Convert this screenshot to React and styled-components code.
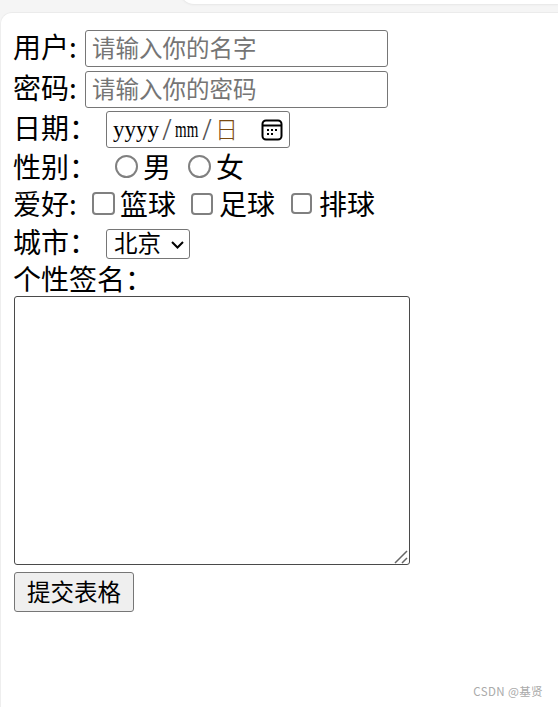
import React from 'react';
import styled, { createGlobalStyle } from 'styled-components';

const GlobalStyle = createGlobalStyle`
  html, body { margin: 0; padding: 0; background: #f5f5f5; }
  body { font-family: "Noto Sans CJK SC", "Liberation Sans", sans-serif; color: #000; }
`;

const Page = styled.div`
  width: 558px; height: 707px; overflow: hidden; position: relative;
  display: flex; flex-direction: column;
`;

const TopTab = styled.div`
  height: 16px; margin: -12px 0 0 180px; background: #fff; flex: none;
  border-bottom-left-radius: 14px;
  box-shadow: 0 1px 2px #e6e6e6;
`;

const Panel = styled.form`
  margin-top: 8px; flex: 1; background: #fff;
  border-top: 1px solid #ebebeb; border-left: 1px solid #eee;
  border-top-left-radius: 12px;
  padding: 17px 0 0 13px;
  display: flex; flex-direction: column; align-items: flex-start;
`;

const Row = styled.div`
  display: flex; align-items: center; height: ${p => p.$h}px;
  margin-bottom: ${p => p.$mb || 0}px;
  font-size: 28px; line-height: 37px;
`;

const Label = styled.span`
  width: ${p => p.$w}px; flex: none; white-space: nowrap;
  margin: 0 1px 0 -1px;
  padding-bottom: ${p => p.$lift || 0}px;
`;

const TextInput = styled.input`
  box-sizing: border-box; width: 303px; height: 37px; padding: 0 6px 3px;
  border: 1px solid #767676; border-radius: 3px; background: #fff;
  font: inherit; font-size: 23.5px; outline: none;
  &::placeholder { color: #757575; opacity: 1; }
`;

const DateBox = styled.div`
  box-sizing: border-box; width: 184px; height: 37px; padding: 0 6px;
  border: 1px solid #767676; border-radius: 3px;
  display: flex; align-items: center;
  font-family: "Liberation Serif", serif; font-size: 23px; line-height: 35px;
`;

const MonthPart = styled.span`
  display: inline-block; width: 24px; flex: none;
  transform: scaleX(0.65); transform-origin: left center;
`;

const Slash = styled.span`
  font-size: 32px; color: #555; width: 16px; text-align: center; flex: none;
`;

const DayPart = styled.span`
  font-family: "Noto Sans CJK SC", sans-serif; font-size: 23px; font-weight: 300;
  color: #7a4a10; padding-bottom: 3px;
`;

const CalendarIcon = styled.svg`
  width: 22px; height: 22px; margin-left: auto; flex: none;
`;

const Choice = styled.label`
  display: flex; align-items: center; margin-right: ${p => p.$mr || 0}px;
`;

const Radio = styled.input.attrs({ type: 'radio' })`
  appearance: none; box-sizing: border-box; width: 23px; height: 23px; margin: 0 5px 0 ${p => p.$ml || 5}px;
  border: 2px solid #808080; border-radius: 50%; background: #fff; flex: none;
`;

const Check = styled.input.attrs({ type: 'checkbox' })`
  appearance: none; box-sizing: border-box; flex: none;
  width: ${p => p.$size}px; height: ${p => p.$size}px;
  margin: 0 ${p => 28 - p.$size}px 0 0;
  border: 2px solid #808080; border-radius: 4px; background: #fff;
`;

const SelectWrap = styled.div`
  position: relative; width: 84px; height: 30px; margin-top: 2px;
`;

const CitySelect = styled.select`
  appearance: none; box-sizing: border-box; display: block; width: 100%; height: 100%; padding: 0 0 0 7px;
  border: 1px solid #767676; border-radius: 3px; background: #fff;
  font-family: "Liberation Sans", "Noto Sans CJK SC", sans-serif; font-size: 23.5px; color: #000;
`;

const Chevron = styled.svg`
  position: absolute; right: 5px; top: 11px; width: 15px; height: 10px; pointer-events: none;
`;

const SignWrap = styled.div`
  position: relative; width: 396px; height: 269px;
`;

const SignBox = styled.textarea`
  box-sizing: border-box; display: block; width: 100%; height: 100%; margin: 0; resize: none;
  border: 1px solid #4a4a4a; border-radius: 3px; background: #fff; outline: none;
`;

const Grip = styled.svg`
  position: absolute; right: 1px; bottom: 1px; width: 16px; height: 16px; pointer-events: none;
`;

const Submit = styled.button`
  box-sizing: border-box; width: 120px; height: 40px; margin-top: 7px; padding: 0 0 3px;
  border: 1px solid #767676; border-radius: 3px; background: #efefef;
  font: inherit; font-size: 23.5px; line-height: 34px; color: #000;
`;

const Watermark = styled.div`
  position: absolute; right: 15px; bottom: 9px;
  font-size: 11.5px; line-height: 14px; color: #aaa; letter-spacing: 0.4px;
`;

export default function App() {
  return (
    <Page>
      <GlobalStyle />
      <TopTab />
      <Panel onSubmit={e => e.preventDefault()}>
        <Row $h={37} $mb={4}>
          <Label $w={71} $lift={4}>用户:</Label>
          <TextInput placeholder="请输入你的名字" />
        </Row>
        <Row $h={37} $mb={3}>
          <Label $w={71} $lift={4}>密码:</Label>
          <TextInput type="password" placeholder="请输入你的密码" />
        </Row>
        <Row $h={37}>
          <Label $w={92} $lift={4}>日期：</Label>
          <DateBox>
            <span>yyyy</span>
            <Slash>/</Slash>
            <MonthPart>mm</MonthPart>
            <Slash>/</Slash>
            <DayPart>日</DayPart>
            <CalendarIcon viewBox="0 0 22 22" fill="none">
              <rect x="1.5" y="1.5" width="19" height="19" rx="3.5" stroke="#000" strokeWidth="2" />
              <path d="M1.5 6.5h19" stroke="#000" strokeWidth="2" />
              <path d="M6 10h2v2H6zM10 10h2v2h-2zM14 10h2v2h-2zM6 14h2v2H6zM10 14h2v2h-2z" fill="#000" />
            </CalendarIcon>
          </DateBox>
        </Row>
        <Row $h={37}>
          <Label $w={96}>性别：</Label>
          <Choice $mr={12}><Radio name="sex" />男</Choice>
          <Choice><Radio name="sex" />女</Choice>
        </Row>
        <Row $h={37}>
          <Label $w={78}>爱好:</Label>
          <Choice $mr={15}><Check $size={23} />篮球</Choice>
          <Choice $mr={16}><Check $size={22} />足球</Choice>
          <Choice><Check $size={21} />排球</Choice>
        </Row>
        <Row $h={41}>
          <Label $w={92} $lift={2}>城市：</Label>
          <SelectWrap>
            <CitySelect defaultValue="北京">
              <option>北京</option>
              <option>上海</option>
            </CitySelect>
            <Chevron viewBox="0 0 15 10" fill="none">
              <path d="M2 2 7.5 7.5 13 2" stroke="#000" strokeWidth="2" />
            </Chevron>
          </SelectWrap>
        </Row>
        <Row $h={33}><Label $lift={2}>个性签名：</Label></Row>
        <SignWrap>
          <SignBox />
          <Grip viewBox="0 0 16 16" fill="none">
            <path d="M2 15 14 3M9 15l5-5" stroke="#666" strokeWidth="1.5" />
          </Grip>
        </SignWrap>
        <Submit type="submit">提交表格</Submit>
      </Panel>
      <Watermark>CSDN @基贤</Watermark>
    </Page>
  );
}
